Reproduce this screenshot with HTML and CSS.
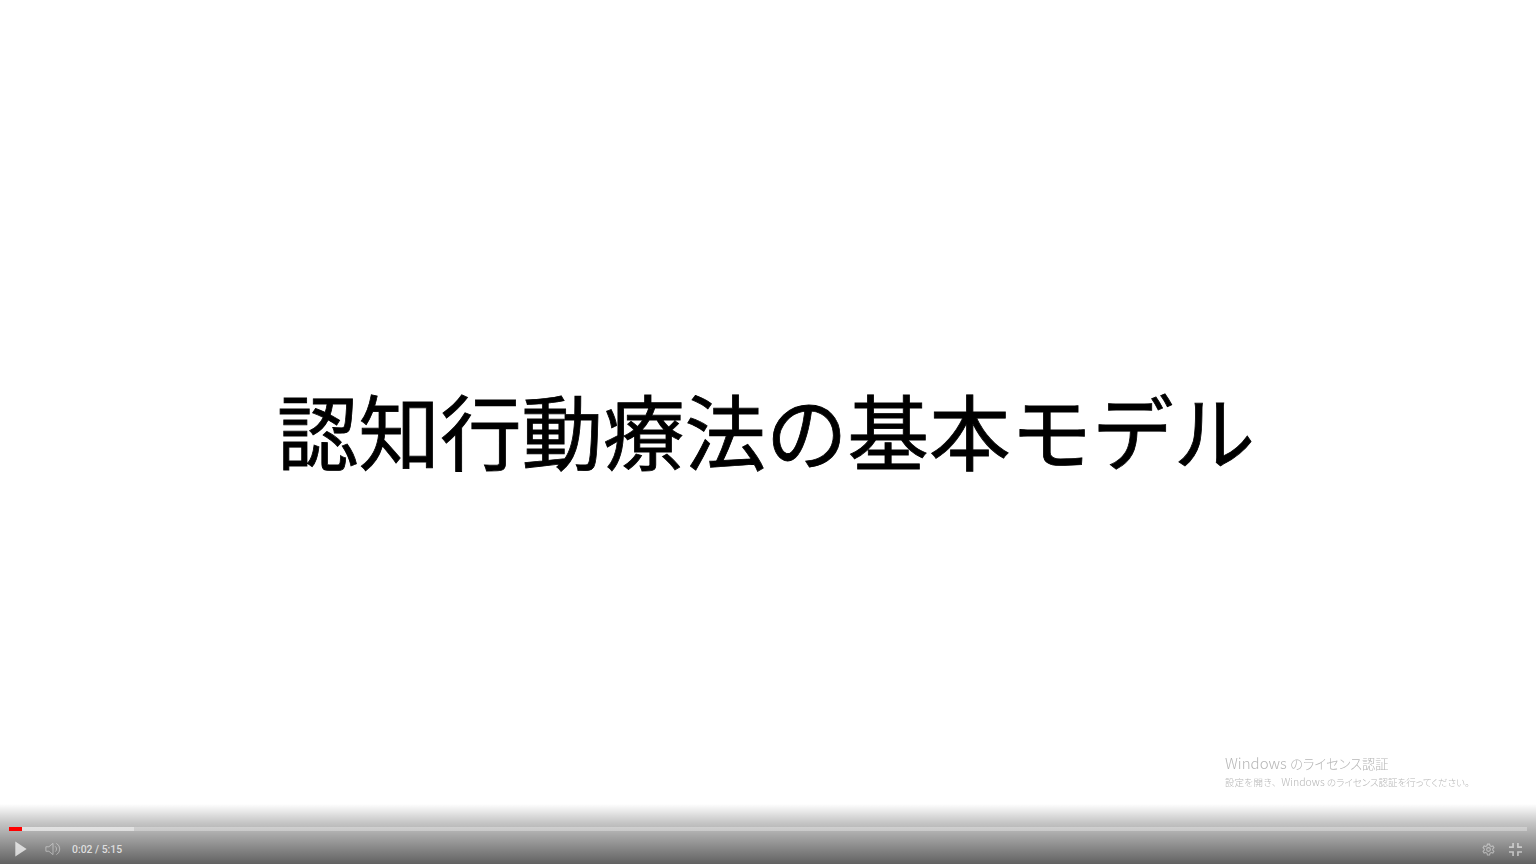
FILE: index.html
```html
<!DOCTYPE html>
<html lang="ja">
<head>
<meta charset="utf-8">
<title>認知行動療法の基本モデル</title>
<link rel="stylesheet" href="styles.css">
</head>
<body>
<main class="player">
  <div class="stage">
    <h1 class="title">認知行動療法の基本モデル</h1>
  </div>
  <div class="watermark">
    <div class="wm-head">Windows <span class="jp-head">のライセンス認証</span></div>
    <div class="wm-sub"><span class="jp-lead">設定を開き、</span>Windows <span class="jp-sub">のライセンス認証を行ってください。</span></div>
  </div>
  <div class="chrome">
    <div class="progress">
      <div class="buffered"></div>
      <div class="played"></div>
    </div>
    <div class="controls">
      <button class="btn btn-play" aria-label="再生">
        <svg viewBox="0 0 36 36" class="ico"><path d="M12 8.500v19l14.500-9.500z" fill="#fff"/></svg>
      </button>
      <button class="btn btn-vol" aria-label="音量">
        <svg viewBox="0 0 24 24" class="ico-vol" fill="none" stroke="#fff" stroke-width="1.100"><path d="M2.500 9v6h4l5.500 4.500v-15L6.500 9z"/><path d="M15 8.500a4.500 4.500 0 0 1 0 7"/><path d="M16.500 4.500a8.500 8.500 0 0 1 0 15"/></svg>
      </button>
      <span class="time">0:02 / 5:15</span>
      <span class="spacer"></span>
      <button class="btn btn-gear" aria-label="設定">
        <svg viewBox="0 0 24 24" class="ico-small" fill="none" stroke="#fff" stroke-width="2"><path d="M10 2h4l.7 3 2.300 1.300 3-.9 2 3.400-2.200 2.200v2l2.200 2.200-2 3.400-3-.9-2.300 1.300-.7 3h-4l-.7-3L7 17.700l-3 .9-2-3.400 2.200-2.200v-2L2 8.800l2-3.400 3 .9L9.300 5z"/><circle cx="12" cy="12" r="3.500"/></svg>
      </button>
      <button class="btn btn-exit" aria-label="全画面表示を終了">
        <svg viewBox="10 10 16 16" class="ico-small" fill="#fff"><path d="M14 14h-4v2h6v-6h-2z"/><path d="M22 14v-4h-2v6h6v-2z"/><path d="M20 26h2v-4h4v-2h-6z"/><path d="M10 22h4v4h2v-6h-6z"/></svg>
      </button>
    </div>
  </div>
</main>
</body>
</html>
```
FILE: styles.css
```css
html, body {
  margin: 0;
  height: 100%;
  background: #fff;
}
.player {
  position: relative;
  width: 100%;
  height: 100vh;
  overflow: hidden;
  background: #fff;
}
.stage {
  height: 100%;
  display: flex;
  align-items: center;
  justify-content: center;
  padding: 0 4px 7px 0;
  box-sizing: border-box;
}
.title {
  margin: 0;
  font-family: "Noto Sans CJK JP", sans-serif;
  font-weight: 400;
  font-size: 81.500px;
  line-height: 1;
  color: #000;
  white-space: nowrap;
  -webkit-text-stroke: 0.800px #000;
  filter: blur(0.5px);
}
.watermark {
  position: absolute;
  left: 1225px;
  top: 753px;
  font-family: "Noto Sans CJK JP", sans-serif;
  font-weight: 300;
  color: #b6b6b6;
  white-space: nowrap;
  filter: blur(0.3px);
}
.wm-head {
  font-size: 15px;
  line-height: 20px;
}
.jp-head {
  font-size: 13.250px;
  font-feature-settings: "palt";
}
.wm-sub {
  font-size: 10.500px;
  line-height: 15px;
}
.jp-lead {
  font-size: 9.500px;
}
.jp-sub {
  font-size: 9.500px;
  font-feature-settings: "palt";
}
.chrome {
  position: absolute;
  left: 0;
  right: 0;
  bottom: 0;
  height: 60px;
  background: linear-gradient(to bottom, rgba(0,0,0,0) 0%, rgba(0,0,0,.22) 30%, rgba(0,0,0,.62) 100%);
  display: flex;
  flex-direction: column;
  justify-content: flex-end;
}
.progress {
  position: relative;
  margin: 0 9px;
  height: 4px;
  background: rgba(255,255,255,.3);
}
.buffered {
  position: absolute;
  left: 0;
  top: 0;
  bottom: 0;
  width: 125px;
  background: rgba(255,255,255,.4);
}
.played {
  position: absolute;
  left: 0;
  top: 0;
  bottom: 0;
  width: 13px;
  background: #f00;
}
.controls {
  display: flex;
  align-items: center;
  box-sizing: border-box;
  height: 33px;
  padding: 3px 6px 0;
}
.btn {
  padding: 0;
  border: 0;
  background: none;
  display: flex;
  align-items: center;
  justify-content: center;
  opacity: .7;
}
.btn-play { width: 28px; height: 30px; }
.btn-vol { width: 38px; height: 30px; opacity: .5; }
.btn-gear { width: 28px; height: 30px; opacity: .45; }
.btn-exit { width: 26px; height: 30px; opacity: .55; margin-right: 2px; }
.ico { width: 28px; height: 28px; }
.ico-vol { width: 18px; height: 18px; }
.ico-small { width: 13px; height: 13px; }
.time {
  font-family: Roboto, "Liberation Sans", sans-serif;
  font-size: 10.400px;
  font-weight: 500;
  color: #dedede;
}
.spacer { flex: 1; }
```
